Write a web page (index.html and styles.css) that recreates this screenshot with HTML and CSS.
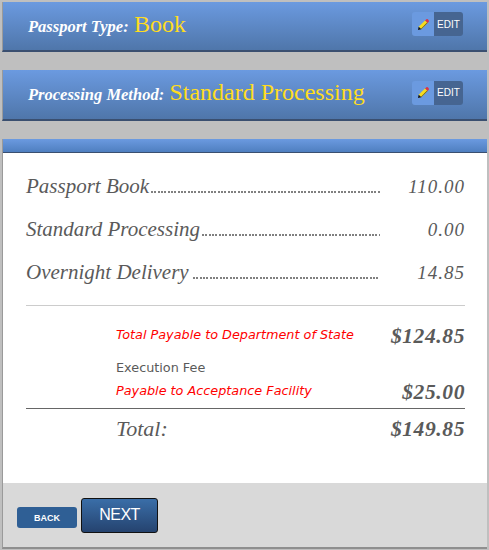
FILE: index.html
```html
<!DOCTYPE html>
<html lang="en">

<head>
    <meta charset="UTF-8">
    <title>Passport Fees</title>
    <link rel="stylesheet" href="styles.css">
</head>

<body>
    <div class="page">
        <div class="bar">
            <div class="bar-title"><em>Passport Type:</em> <span>Book</span></div>
            <a class="edit-btn" href="#">
                <span class="edit-icon">
                    <svg width="11" height="11" viewBox="0 0 10 10">
                        <path d="M2.9 9.4 L0.6 7.1 L6.6 1.1 L8.9 3.4 Z" fill="#f7dc1e"/>
                        <path d="M2.9 9.4 L8.9 3.4 L8.5 3 L2.5 9 Z" fill="#5a4a14"/>
                        <path d="M6.4 1.3 L7.6 0.2 Q8.6 -0.2 9.4 0.6 Q10.2 1.5 9.8 2.4 L8.7 3.6 Z" fill="#d8344a"/>
                        <path d="M0 10 L0.6 7 L3 9.4 Z" fill="#111111"/>
                    </svg>
                </span>
                <span class="edit-text">EDIT</span>
            </a>
        </div>

        <div class="bar">
            <div class="bar-title"><em>Processing Method:</em> <span>Standard Processing</span></div>
            <a class="edit-btn" href="#">
                <span class="edit-icon">
                    <svg width="11" height="11" viewBox="0 0 10 10">
                        <path d="M2.9 9.4 L0.6 7.1 L6.6 1.1 L8.9 3.4 Z" fill="#f7dc1e"/>
                        <path d="M2.9 9.4 L8.9 3.4 L8.5 3 L2.5 9 Z" fill="#5a4a14"/>
                        <path d="M6.4 1.3 L7.6 0.2 Q8.6 -0.2 9.4 0.6 Q10.2 1.5 9.8 2.4 L8.7 3.6 Z" fill="#d8344a"/>
                        <path d="M0 10 L0.6 7 L3 9.4 Z" fill="#111111"/>
                    </svg>
                </span>
                <span class="edit-text">EDIT</span>
            </a>
        </div>

        <div class="panel">
            <div class="panel-head"></div>
            <div class="panel-body">
                <div class="item">
                    <span class="item-name">Passport Book</span>
                    <span class="item-dots"></span>
                    <span class="item-price">110.00</span>
                </div>
                <div class="item">
                    <span class="item-name">Standard Processing</span>
                    <span class="item-dots"></span>
                    <span class="item-price">0.00</span>
                </div>
                <div class="item">
                    <span class="item-name">Overnight Delivery</span>
                    <span class="item-dots item-dots-gap"></span>
                    <span class="item-price">14.85</span>
                </div>

                <div class="summary">
                    <div class="summary-row state-row">
                        <span class="red-label">Total Payable to Department of State</span>
                        <span class="amount">$124.85</span>
                    </div>
                    <div class="fee-label">Execution Fee</div>
                    <div class="summary-row facility-row">
                        <span class="red-label">Payable to Acceptance Facility</span>
                        <span class="amount">$25.00</span>
                    </div>
                    <div class="summary-row total-row">
                        <span class="total-label">Total:</span>
                        <span class="amount">$149.85</span>
                    </div>
                </div>
            </div>
            <div class="panel-foot">
                <a class="back-btn" href="#">BACK</a>
                <a class="next-btn" href="#">NEXT</a>
            </div>
        </div>
    </div>
</body>

</html>
```

FILE: styles.css
```css
body {
    margin: 0;
    background-color: #bfbfbf;
    font-family: "Liberation Serif", serif;
}

.page {
    width: 485px;
    height: 550px;
    padding-top: 2px;
    margin-left: 2px;
    box-sizing: border-box;
}

.bar {
    height: 50px;
    margin-bottom: 18px;
    display: flex;
    align-items: center;
    justify-content: space-between;
    padding: 0 24px 4px 25px;
    box-sizing: border-box;
    background: linear-gradient(#6b9ae0, #4f76aa);
    border-left: 1px solid #9a9a9a;
    border-bottom: 2px solid #3a4f70;
}

.bar + .bar {
    height: 51px;
}

.bar-title {
    color: #ffffff;
    font-size: 17px;
    white-space: nowrap;
}

.bar-title em {
    font-weight: bold;
    font-size: 16.5px;
}

.bar-title span {
    color: #ffdc1e;
    font-size: 24px;
    margin-left: 1px;
}

.edit-btn {
    display: flex;
    height: 24px;
    width: 51px;
    border-radius: 3px;
    overflow: hidden;
    text-decoration: none;
}

.edit-icon {
    width: 22px;
    display: flex;
    align-items: center;
    justify-content: center;
    background-color: #6b9ae0;
}

.edit-text {
    flex: 1;
    display: flex;
    align-items: center;
    justify-content: center;
    background-color: #466591;
    color: #ffffff;
    font-family: "Liberation Sans", sans-serif;
    font-size: 10px;
}

.panel {
    border-left: 1px solid #9a9a9a;
    border-bottom: 2px solid #8f8f8f;
    height: 408px;
    display: flex;
    flex-direction: column;
}

.panel-head {
    height: 13px;
    background: linear-gradient(#6b9ae0, #4f7fc0);
    border-bottom: 1px solid #3a4f70;
}

.panel-body {
    flex: 1;
    background-color: #ffffff;
    padding: 12px 22px 0 23px;
}

.item {
    display: flex;
    align-items: baseline;
    height: 43px;
    line-height: 43px;
    color: #5a5a5a;
    font-size: 21px;
    font-style: italic;
}

.item-dots {
    flex: 1;
    height: 2px;
    margin-left: 2px;
    background-image: linear-gradient(to right,
        #808080 2px, transparent 2px,
        transparent 3px, #808080 3px,
        #808080 5px, transparent 5px,
        transparent 7px, #808080 7px,
        #808080 9px, transparent 9px);
    background-size: 10px 2px;
}

.item-dots-gap {
    margin-left: 4px;
}

.item-price {
    width: 85px;
    text-align: right;
    font-size: 19px;
    letter-spacing: 1px;
}

.summary {
    border-top: 1px solid #cccccc;
    margin-top: 11px;
    padding-top: 18px;
}

.summary-row {
    display: flex;
    justify-content: space-between;
    align-items: center;
}

.state-row,
.facility-row {
    padding-left: 90px;
}

.red-label {
    margin-bottom: 4px;
    color: #ff0000;
    font-family: "DejaVu Sans", sans-serif;
    font-size: 12.8px;
    font-style: italic;
}

.amount {
    color: #5a5a5a;
    font-size: 21.5px;
    font-weight: bold;
    font-style: italic;
    letter-spacing: 0.6px;
}

.fee-label {
    margin: 11px 0 5px 90px;
    color: #5a5a5a;
    font-family: "DejaVu Sans", sans-serif;
    font-size: 12.8px;
}

.total-row {
    border-top: 1px solid #666666;
    margin-top: 3px;
    padding: 7px 0 0 90px;
}

.total-label {
    color: #5a5a5a;
    font-size: 22px;
    font-style: italic;
}

.panel-foot {
    height: 64px;
    display: flex;
    align-items: center;
    gap: 4px;
    padding-left: 14px;
    box-sizing: border-box;
    background-color: #d9d9d9;
}

.back-btn {
    width: 60px;
    height: 21px;
    margin-top: 5px;
    display: flex;
    align-items: center;
    justify-content: center;
    border-radius: 3px;
    background-color: #2f5f95;
    color: #ffffff;
    font-family: "Liberation Sans", sans-serif;
    font-size: 9px;
    font-weight: bold;
    text-decoration: none;
}

.next-btn {
    width: 75px;
    height: 33px;
    display: flex;
    align-items: center;
    justify-content: center;
    border: 1px solid #111111;
    border-radius: 3px;
    background: linear-gradient(#3a6ea8, #25436f);
    color: #ffffff;
    font-family: "Liberation Sans", sans-serif;
    font-size: 16px;
    letter-spacing: -0.5px;
    text-decoration: none;
}
```
